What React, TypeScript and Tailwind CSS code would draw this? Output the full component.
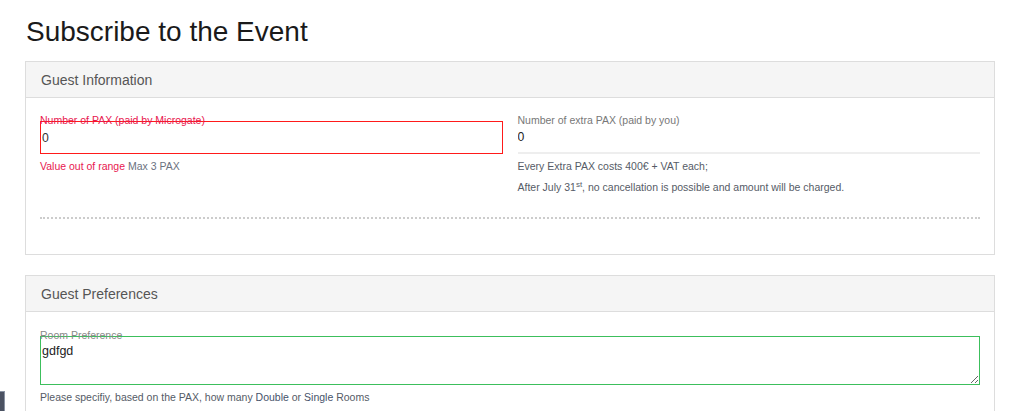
import React from "react";

function Panel({ title, children }: { title: string; children: React.ReactNode }) {
  return (
    <div className="border border-[#dddddd] bg-white">
      <div className="h-[36px] flex items-center px-[15px] bg-[#f5f5f5] border-b border-[#dddddd]">
        <h3 className="text-[14px] leading-[16px] text-[#555555]">{title}</h3>
      </div>
      {children}
    </div>
  );
}

export default function App() {
  return (
    <div
      className="min-h-[411px] bg-white pl-[25px] pt-[16px]"
      style={{ fontFamily: '"Liberation Sans", Arial, sans-serif' }}
    >
      <div className="w-[970px]">
        <h1 className="text-[28px] leading-[31px] text-[#1a1a1a] pl-[1px] mb-[14px]">Subscribe to the Event</h1>

        {/* Guest information */}
        <Panel title="Guest Information">
          <div className="px-[14px] pt-[16px] pb-[35px]">
            <div className="grid grid-cols-2 gap-[15px]">
              <div>
                <label className="relative z-10 block text-[10.5px] leading-[12px] text-[#e8174f] -mb-[5px]">
                  Number of PAX (paid by Microgate)
                </label>
                <input
                  readOnly
                  value="0"
                  className="block w-full h-[33px] border border-[#ff1a1a] px-[1px] text-[12.25px] text-[#333] outline-none bg-transparent"
                />
                <p className="mt-[6px] text-[10.5px] leading-[12px]">
                  <span className="text-[#e8174f]">Value out of range</span>{" "}
                  <span className="text-[#6b7280]">Max 3 PAX</span>
                </p>
              </div>
              <div>
                <label className="block text-[10.5px] leading-[12px] text-[#777777] -mb-[4px]">
                  Number of extra PAX (paid by you)
                </label>
                <input
                  readOnly
                  value="0"
                  className="block w-full h-[32px] border-b-2 border-[#eeeeee] px-0 text-[12.25px] text-[#222] outline-none bg-transparent"
                />
                <p className="mt-[6px] text-[10.5px] leading-[12px] text-[#555b66]">
                  Every Extra PAX costs 400€ + VAT each;
                </p>
                <p className="mt-[9px] text-[10.5px] leading-[12px] text-[#555b66]">
                  After July 31<sup className="text-[8px]">st</sup>, no cancellation is possible and amount will be charged.
                </p>
              </div>
            </div>
            <div className="mt-[24px] border-t-2 border-dotted border-[#cccccc]" />
          </div>
        </Panel>

        <div className="h-[20px]" />

        {/* Guest preferences */}
        <Panel title="Guest Preferences">
          <div className="px-[14px] pt-[17px] pb-[15px]">
            <label className="relative z-10 block text-[10.5px] leading-[12px] text-[#888888] -mb-[5px]">
              Room Preference
            </label>
            <textarea
              readOnly
              value="gdfgd"
              className="block w-full h-[49px] border border-[#3cbf5c] px-[1px] pt-[7px] text-[12.5px] leading-[15px] text-[#222] outline-none bg-transparent resize-y"
            />
            <p className="mt-[6px] text-[10.5px] leading-[12px] text-[#555b66]">
              Please specifiy, based on the PAX, how many <span className="text-[#46526a]">Double</span> or{" "}
              <span className="text-[#46526a]">Single</span> Rooms
            </p>
          </div>
        </Panel>
      </div>

      <div className="fixed left-0 top-[391px] w-[5px] h-[20px] bg-[#4b5262] border-t border-r border-[#8a93a3]" />
    </div>
  );
}
